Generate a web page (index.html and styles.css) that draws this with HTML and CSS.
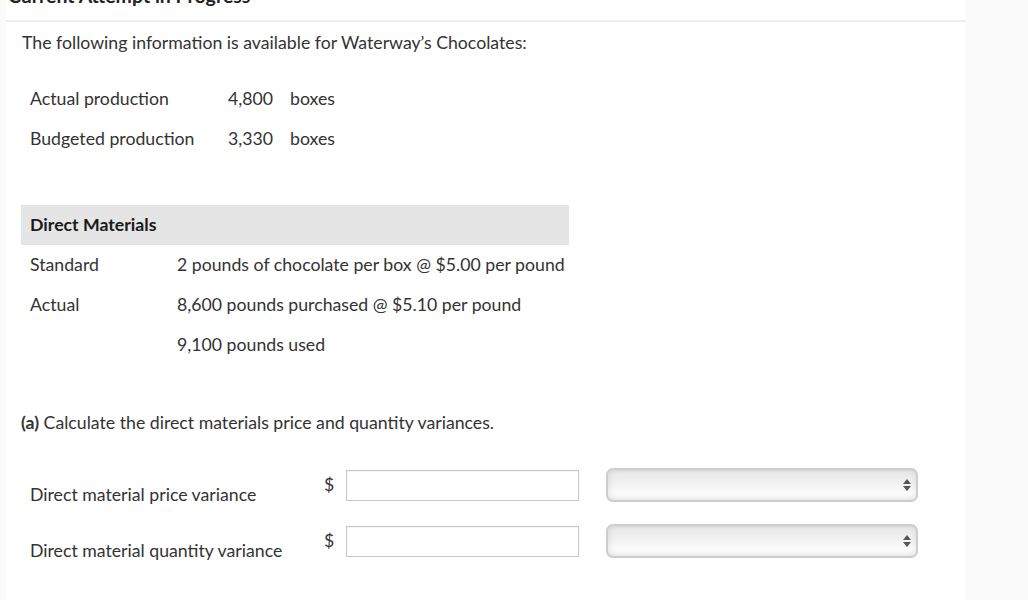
FILE: index.html
```html
<!DOCTYPE html>
<html lang="en">
<head>
<meta charset="utf-8">
<title>Current Attempt in Progress</title>
<link rel="stylesheet" href="styles.css">
</head>
<body>
<div class="page">
  <div class="head"><h2>Current Attempt in Progress</h2></div>
  <p class="intro">The following information is available for Waterway’s Chocolates:</p>

  <div class="prod">
    <div class="prod-row"><span class="c1">Actual production</span><span class="c2">4,800</span><span class="c3">boxes</span></div>
    <div class="prod-row"><span class="c1">Budgeted production</span><span class="c2">3,330</span><span class="c3">boxes</span></div>
  </div>

  <div class="dm">
    <div class="dm-head">Direct Materials</div>
    <div class="dm-row"><span class="d1">Standard</span><span class="d2">2 pounds of chocolate per box @ $5.00 per pound</span></div>
    <div class="dm-row"><span class="d1">Actual</span><span class="d2">8,600 pounds purchased @ $5.10 per pound</span></div>
    <div class="dm-row"><span class="d1"></span><span class="d2">9,100 pounds used</span></div>
  </div>

  <p class="question"><b>(a)</b> Calculate the direct materials price and quantity variances.</p>

  <div class="answers">
    <div class="ans-row">
      <span class="ans-label">Direct material price variance</span>
      <span class="dollar">$</span>
      <span class="field"></span>
      <span class="select"><span class="arrows"><i class="up"></i><i class="down"></i></span></span>
    </div>
    <div class="ans-row">
      <span class="ans-label">Direct material quantity variance</span>
      <span class="dollar">$</span>
      <span class="field"></span>
      <span class="select"><span class="arrows"><i class="up"></i><i class="down"></i></span></span>
    </div>
  </div>
</div>
</body>
</html>
```
FILE: styles.css
```css
html, body {
  margin: 0;
  padding: 0;
  background: #fafafa;
  font-family: Lato, "Open Sans", sans-serif;
  color: #333;
  font-size: 17.7px;
}
.page {
  margin-left: 6px;
  width: 960px;
  min-height: 600px;
  background: #fff;
  overflow: hidden;
}
.head {
  height: 20px;
  overflow: hidden;
  border-bottom: 2px solid #eee;
}
.head h2 {
  margin: -15px 0 0 2px;
  font-size: 19.5px;
  line-height: 22px;
  font-weight: 700;
  color: #222;
}
.intro {
  margin: 11px 0 0 16px;
  line-height: 20px;
}
.prod {
  margin: 25px 0 0 24px;
}
.prod-row {
  display: flex;
  height: 40px;
  align-items: center;
}
.c1 { width: 198px; }
.c2 { width: 62px; }
.dm {
  margin: 47px 0 0 15px;
  width: 548px;
}
.dm-head {
  background: #e5e5e5;
  height: 40px;
  display: flex;
  align-items: center;
  padding-left: 9px;
  padding-bottom: 2px;
  box-sizing: border-box;
  font-weight: 700;
  color: #1a1a1a;
}
.dm-row {
  display: flex;
  height: 40px;
  align-items: center;
  padding-left: 9px;
  padding-bottom: 2px;
  box-sizing: border-box;
}
.d1 { width: 147px; }
.question {
  margin: 48px 0 0 15px;
  line-height: 20px;
}
.question b { font-weight: 700; }
.answers {
  margin: 35px 0 0 24px;
  display: flex;
  flex-direction: column;
  gap: 22px;
}
.ans-row {
  display: flex;
  height: 34px;
  align-items: center;
}
.ans-label {
  width: 294px;
  align-self: flex-end;
  line-height: 20px;
  margin-bottom: -3px;
}
.dollar {
  width: 22px;
  margin-top: -2px;
}
.field {
  width: 231px;
  height: 29px;
  border: 1px solid #c6c6c6;
  box-shadow: inset 0 1px 1px rgba(0,0,0,0.04);
  background: #fff;
  margin-top: 1px;
}
.select {
  box-sizing: border-box;
  margin-left: 27px;
  width: 312px;
  height: 34px;
  border: 2px solid #cdcdcd;
  border-radius: 7px;
  background: linear-gradient(to bottom, #e6e6e6 0%, #f2f2f2 45%, #fbfbfb 75%, #f3f3f3 100%);
  box-shadow: inset 3px 0 4px rgba(0,0,0,0.06), inset -3px 0 4px rgba(0,0,0,0.04);
  display: flex;
  align-items: center;
  justify-content: flex-end;
  padding-right: 5px;
}
.arrows {
  display: flex;
  flex-direction: column;
  gap: 2px;
}
.arrows i {
  display: block;
  width: 0;
  height: 0;
  border-left: 4px solid transparent;
  border-right: 4px solid transparent;
}
.arrows .up { border-bottom: 5px solid #555; }
.arrows .down { border-top: 5px solid #555; }
```
